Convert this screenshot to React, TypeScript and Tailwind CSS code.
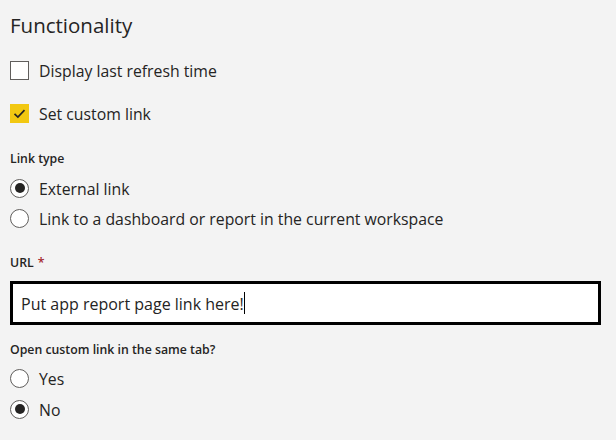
import React from 'react'

const font = { fontFamily: '"Open Sans", "Noto Sans", sans-serif' }

function Checkbox({ checked, label }: { checked?: boolean; label: string }) {
  return (
    <div className="flex h-[30px] items-center">
      {checked ? (
        <div className="flex h-[19px] w-[19px] items-center justify-center bg-[#f2c811]">
          <svg width="13" height="11" viewBox="0 0 13 11" fill="none">
            <path d="M1.5 5.8l3.4 3.2L11.5 2.2" stroke="#252423" strokeWidth="1.7" />
          </svg>
        </div>
      ) : (
        <div className="h-[19px] w-[19px] border border-[#605e5c] bg-white" />
      )}
      <span className="ml-[10px] pt-[3px] text-[15.8px] text-[#252423]">{label}</span>
    </div>
  )
}

function Radio({ checked, label }: { checked?: boolean; label: string }) {
  return (
    <div className="flex h-[30px] items-center">
      <div className="flex h-[19px] w-[19px] items-center justify-center rounded-full border border-[#605e5c] bg-white">
        {checked && <div className="h-[10px] w-[10px] rounded-full bg-[#252423]" />}
      </div>
      <span className="ml-[10px] pt-[3px] text-[15.8px] text-[#252423]">{label}</span>
    </div>
  )
}

export default function App() {
  return (
    <div className="h-[440px] w-[616px] bg-[#f3f3f3] pl-[10px] pr-[15px]" style={font}>
      {/* Heading */}
      <div className="flex h-[46px] items-center pt-[4px]">
        <h2 className="text-[20.5px] text-[#252423]">Functionality</h2>
      </div>

      <div className="mt-[9px]">
        <Checkbox label="Display last refresh time" />
      </div>
      <div className="mt-[13px]">
        <Checkbox checked label="Set custom link" />
      </div>

      <div className="mt-[20px] flex h-[20px] items-center pt-[2px] text-[12.3px] font-semibold text-[#252423]">
        Link type
      </div>
      <div className="mt-[5px]">
        <Radio checked label="External link" />
        <Radio label="Link to a dashboard or report in the current workspace" />
      </div>

      <div className="mt-[19px] flex h-[20px] items-center pt-[2px] text-[12.3px] font-semibold text-[#252423]">
        URL <span className="ml-[4px] text-[#a4262c]">*</span>
      </div>

      <div className="mt-[9px] flex h-[44px] items-center border-[3px] border-black bg-white pl-[8px]">
        <span className="pt-[2px] text-[16px] text-[#252423]">Put app report page link here!</span>
        <span className="h-[22px] w-px bg-black" />
      </div>

      <div className="mt-[14px] flex h-[20px] items-center pt-[2px] text-[12.3px] font-semibold text-[#252423]">
        Open custom link in the same tab?
      </div>
      <div className="mt-[4px]">
        <Radio label="Yes" />
        <div className="mt-[1px]">
          <Radio checked label="No" />
        </div>
      </div>
    </div>
  )
}
